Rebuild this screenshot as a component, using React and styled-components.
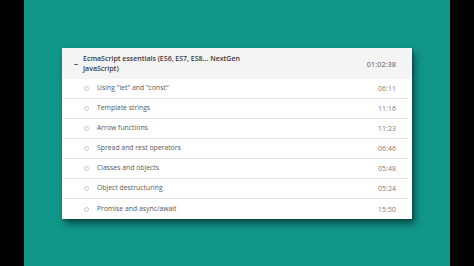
import React from "react";
import styled, { createGlobalStyle } from "styled-components";

const Global = createGlobalStyle`
  html, body { margin: 0; padding: 0; background: #000; }
  body { font-family: "Open Sans", "Noto Sans", sans-serif; }
`;

const Frame = styled.div`
  width: 474px;
  height: 266px;
  display: flex;
  justify-content: center;
  background: #000;
`;

const Stage = styled.div`
  width: 426px;
  height: 266px;
  background: #11968a;
  display: flex;
  flex-direction: column;
  padding: 48px 0 0 38px;
  box-sizing: border-box;
`;

const Card = styled.div`
  width: 350px;
  background: #fff;
  box-shadow: 3px 5px 7px rgba(0, 30, 25, 0.55), 1px 1px 2px rgba(0,0,0,0.3);
  display: flex;
  flex-direction: column;
`;

const Header = styled.div`
  height: 31px;
  background: #f4f4f4;
  display: flex;
  align-items: center;
  padding: 0 16px 0 12px;
  color: #3a3a3a;
`;

const Dash = styled.span`
  width: 9px;
  font-size: 8px;
  font-weight: 600;
  flex: none;
`;

const Title = styled.div`
  width: 170px;
  margin-right: auto;
  font-size: 7px;
  font-weight: 600;
  line-height: 10px;
`;

const Time = styled.div`
  font-size: ${(p) => (p.$big ? "7.2px" : "6.9px")};
  color: ${(p) => (p.$big ? "#5a5a5a" : "#7a7a7a")};
  letter-spacing: 0.1px;
`;

const List = styled.div`
  display: flex;
  flex-direction: column;
  margin: 0 4px 0 1px;
`;

const Row = styled.div`
  height: 20px;
  box-sizing: border-box;
  display: flex;
  align-items: center;
  padding: 0 12px 0 21px;
  border-bottom: ${(p) => (p.$last ? "none" : "1px solid #e6e6e6")};
`;

const Dot = styled.span`
  width: 3px;
  height: 3px;
  border: 1.2px solid #c4c4c4;
  border-radius: 50%;
  flex: none;
  margin-right: 8px;
`;

const Label = styled.span`
  flex: 1;
  font-size: 6.85px;
  color: #585858;
  line-height: 10px;
  margin-top: -1px;
`;

const lectures = [
  ['Using "let" and "const"', "06:11"],
  ["Template strings", "11:16"],
  ["Arrow functions", "11:23"],
  ["Spread and rest operators", "06:46"],
  ["Classes and objects", "05:48"],
  ["Object destructuring", "05:24"],
  ["Promise and async/await", "15:50"],
];

export default function App() {
  return (
    <>
      <Global />
      <Frame>
        <Stage>
          <Card>
            <Header>
              <Dash>–</Dash>
              <Title>EcmaScript essentials (ES6, ES7, ES8... NextGen JavaScript)</Title>
              <Time $big>01:02:38</Time>
            </Header>
            <List>
              {lectures.map(([name, t], i) => (
                <Row key={name} $last={i === lectures.length - 1}>
                  <Dot />
                  <Label>{name}</Label>
                  <Time>{t}</Time>
                </Row>
              ))}
            </List>
          </Card>
        </Stage>
      </Frame>
    </>
  );
}
